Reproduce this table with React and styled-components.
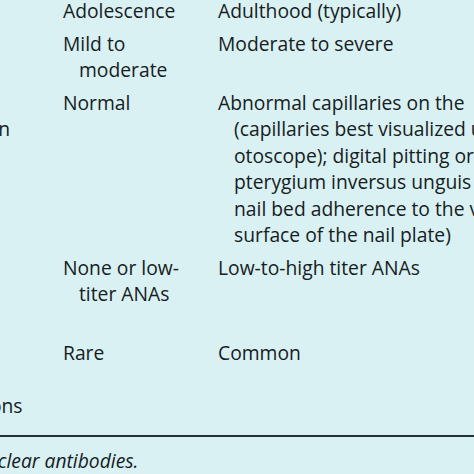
import React from 'react';
import styled, { createGlobalStyle } from 'styled-components';

const GlobalStyle = createGlobalStyle`
  html, body {
    margin: 0;
    padding: 0;
    background: #d9f1f3;
  }
  body {
    font-family: "Open Sans", "Noto Sans", "DejaVu Sans", sans-serif;
    color: #162022;
  }
`;

const Page = styled.div`
  width: 474px;
  height: 474px;
  overflow: hidden;
  background: #d9f1f3;
`;

const Sheet = styled.div`
  width: 760px;
  margin-top: -5px;
  margin-left: -118px;
  font-size: 19.3px;
  line-height: 26.5px;
`;

const Row = styled.div`
  display: grid;
  grid-template-columns: 181px 155px 1fr;
  padding: 3px 0 ${(p) => (p.$last ? 15 : 3)}px;
`;

const Cell = styled.div`
  white-space: nowrap;
`;

const Line = styled.div`
  padding-left: ${(p) => (p.$cont ? 16 : 0)}px;
`;

const Rule = styled.div`
  height: 2px;
  background: #263234;
`;

const Footnote = styled.p`
  margin: 11px 0 0 7px;
  font-style: italic;
  white-space: nowrap;
`;

const rows = [
  { label: ['Onset age'], primary: ['Adolescence'], secondary: ['Adulthood (typically)'] },
  { label: ['Severity'], primary: ['Mild to', 'moderate'], secondary: ['Moderate to severe'] },
  {
    label: ['Capillary', 'examination'],
    primary: ['Normal'],
    secondary: [
      'Abnormal capillaries on the',
      '(capillaries best visualized using an',
      'otoscope); digital pitting or',
      'pterygium inversus unguis',
      'nail bed adherence to the ventral',
      'surface of the nail plate)',
    ],
  },
  { label: ['ANA status', '', ''], primary: ['None or low-', 'titer ANAs'], secondary: ['Low-to-high titer ANAs'] },
  { label: ['Digital', 'ischemic', 'complications'], primary: ['Rare'], secondary: ['Common'] },
];

const Lines = ({ items }) =>
  items.map((text, i) => (
    <Line key={i} $cont={i > 0}>
      {text || '\u00a0'}
    </Line>
  ));

export default function App() {
  return (
    <Page>
      <GlobalStyle />
      <Sheet>
        {rows.map((row, i) => (
          <Row key={i} $last={i === rows.length - 1}>
            <Cell><Lines items={row.label} /></Cell>
            <Cell><Lines items={row.primary} /></Cell>
            <Cell><Lines items={row.secondary} /></Cell>
          </Row>
        ))}
        <Rule />
        <Footnote>ANAs, antinuclear antibodies.</Footnote>
      </Sheet>
    </Page>
  );
}
